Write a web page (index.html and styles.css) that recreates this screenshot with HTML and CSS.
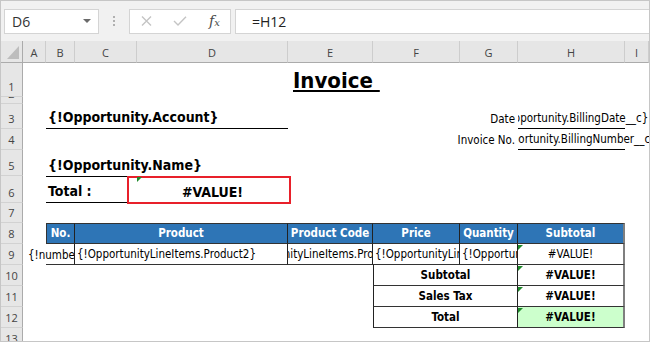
FILE: index.html
```html
<!DOCTYPE html>
<html lang="en">
<head>
  <meta charset="UTF-8" />
  <title>Invoice - Book1</title>
  <link rel="stylesheet" href="styles.css">
</head>
<body>
  <div class="window">

    <div class="toolbar">
      <div class="name-box">
        <span>D6</span>
        <span class="caret"></span>
      </div>
      <div class="grip"><i></i><i></i><i></i></div>
      <div class="fx-buttons">
        <svg class="btn-icon" width="11" height="10" viewBox="0 0 11 10"><path d="M1 0.5L10 9.5M10 0.5L1 9.5" /></svg>
        <svg class="btn-icon" width="14" height="10" viewBox="0 0 14 10"><path d="M1 5L5 9L13 0.8" /></svg>
        <span class="fx">f<span>x</span></span>
      </div>
      <div class="formula">=H12</div>
    </div>

    <div class="sheet">
      <!-- column headers -->
      <div class="corner"></div>
      <div class="col-head c-a">A</div>
      <div class="col-head c-b">B</div>
      <div class="col-head c-c">C</div>
      <div class="col-head c-d">D</div>
      <div class="col-head c-e">E</div>
      <div class="col-head c-f">F</div>
      <div class="col-head c-g">G</div>
      <div class="col-head c-h">H</div>
      <div class="col-head c-i">I</div>

      <!-- row headers -->
      <div class="row-head r1">1</div>
      <div class="row-head r2">2</div>
      <div class="row-head r3">3</div>
      <div class="row-head r4">4</div>
      <div class="row-head r5">5</div>
      <div class="row-head r6">6</div>
      <div class="row-head r7">7</div>
      <div class="row-head r8">8</div>
      <div class="row-head r9">9</div>
      <div class="row-head r10">10</div>
      <div class="row-head r11">11</div>
      <div class="row-head r12">12</div>
      <div class="row-head r13">13</div>

      <!-- title -->
      <div class="cell title c-e r1"><span>Invoice&nbsp;</span></div>

      <!-- account / dates -->
      <div class="cell label line c-bd r3">{!Opportunity.Account}</div>
      <div class="cell right c-g r3">Date</div>
      <div class="spill c-hi r3"><div class="field">{!Opportunity.BillingDate__c}</div></div>

      <div class="cell right c-g r4">Invoice No.</div>
      <div class="spill c-hi r4"><div class="field">{!Opportunity.BillingNumber__c}</div></div>

      <div class="cell label c-b r5">{!Opportunity.Name}</div>

      <div class="cell label line top c-bc r6">Total :</div>
      <div class="cell label center flag c-d r6">#VALUE!</div>
      <div class="marked c-d r6"></div>

      <!-- table header -->
      <div class="cell th first c-b r8">No.</div>
      <div class="cell th c-cd r8">Product</div>
      <div class="cell th c-e r8">Product Code</div>
      <div class="cell th c-f r8">Price</div>
      <div class="cell th c-g r8">Quantity</div>
      <div class="cell th last c-h r8">Subtotal</div>

      <!-- line item -->
      <div class="cell clip c-ab r9">{!number}</div>
      <div class="cell td c-b r9"></div>
      <div class="cell td clip c-cd r9">{!OpportunityLineItems.Product2}</div>
      <div class="cell td clip center c-e r9">{!OpportunityLineItems.ProductCode}</div>
      <div class="cell td clip c-f r9">{!OpportunityLineItems.UnitPrice}</div>
      <div class="cell td clip c-g r9">{!OpportunityLineItems.Quantity}</div>
      <div class="cell td last center flag c-h r9">#VALUE!</div>

      <!-- totals -->
      <div class="cell td total-label c-fg r10">Subtotal</div>
      <div class="cell td last center bold flag c-h r10">#VALUE!</div>
      <div class="cell td total-label c-fg r11">Sales Tax</div>
      <div class="cell td last center bold flag c-h r11">#VALUE!</div>
      <div class="cell td total-label c-fg r12">Total</div>
      <div class="cell td last center bold flag green c-h r12">#VALUE!</div>
    </div>

  </div>
</body>
</html>
```

FILE: styles.css
```css
* {
  box-sizing: border-box;
}

body {
  margin: 0;
  background: #fff;
}

.window {
  width: 650px;
  height: 342px;
  border: 1px solid #c6c6c6;
  overflow: hidden;
  background: #fff;
}

/* formula bar */
.toolbar {
  height: 40px;
  display: flex;
  align-items: center;
  padding-left: 3px;
  background: #f1f1f1;
  font-family: "Open Sans", sans-serif;
  color: #333;
}

.name-box {
  width: 95px;
  height: 25px;
  display: flex;
  align-items: center;
  justify-content: space-between;
  padding: 0 7px 0 7px;
  background: #fff;
  border: 1px solid #d4d4d4;
  font-size: 14px;
}

.caret {
  border-left: 4px solid transparent;
  border-right: 4px solid transparent;
  border-top: 4px solid #6a6a6a;
}

.grip {
  width: 6px;
  margin-left: 12px;
  display: flex;
  flex-direction: column;
  align-items: center;
  gap: 2px;
}

.grip i {
  width: 2px;
  height: 2px;
  background: #b0b0b0;
}

.fx-buttons {
  width: 102px;
  height: 25px;
  margin-left: 12px;
  display: flex;
  align-items: center;
  gap: 21px;
  padding-left: 11px;
  background: #fff;
  border: 1px solid #d4d4d4;
}

.btn-icon {
  fill: none;
  stroke: #c4c4c4;
  stroke-width: 1.4;
}

.fx {
  font-family: "DejaVu Serif", serif;
  font-style: italic;
  font-size: 14px;
  color: #4a4a4a;
  margin-left: 1px;
}

.fx span {
  font-size: 10px;
}

.formula {
  flex: 1;
  height: 25px;
  margin-left: 4px;
  padding-left: 16px;
  display: flex;
  align-items: center;
  background: #fff;
  border: 1px solid #d4d4d4;
  border-right: none;
  font-size: 14px;
  color: #222;
}

/* sheet grid */
.sheet {
  display: grid;
  grid-template-columns: 22px 23px 29px 62px 151px 85px 87px 58px 107px 24px;
  grid-template-rows: 22px 34px 7px 25px 21px 26px 27px 20px repeat(6, 21px);
  font-family: "DejaVu Sans Condensed", "Liberation Sans", sans-serif;
  font-size: 11.5px;
  color: #000;
}

.corner {
  grid-row: 1;
  grid-column: 1;
  position: relative;
  background: #e6e6e6;
  border-right: 1px solid #ababab;
  border-bottom: 1px solid #ababab;
}

.corner::after {
  content: "";
  position: absolute;
  right: 3px;
  bottom: 3px;
  width: 12px;
  height: 13px;
  background: #bdbdbd;
  clip-path: polygon(100% 0, 100% 100%, 0 100%);
}

.col-head {
  grid-row: 1;
  display: flex;
  align-items: center;
  justify-content: center;
  padding-top: 1px;
  background: #e6e6e6;
  border-right: 1px solid #cdcdcd;
  border-bottom: 1px solid #ababab;
  font-family: "Open Sans", sans-serif;
  font-size: 11px;
  color: #444;
}

.row-head {
  grid-column: 1;
  display: flex;
  align-items: flex-end;
  justify-content: center;
  overflow: hidden;
  padding-bottom: 2px;
  line-height: 15px;
  background: #e6e6e6;
  border-right: 1px solid #ababab;
  border-bottom: 1px solid #d2d2d2;
  font-family: "Open Sans", sans-serif;
  font-size: 11px;
  color: #444;
}

/* columns */
.c-a { grid-column: 2; }
.c-b { grid-column: 3; }
.c-c { grid-column: 4; }
.c-d { grid-column: 5; }
.c-e { grid-column: 6; }
.c-f { grid-column: 7; }
.c-g { grid-column: 8; }
.c-h { grid-column: 9; }
.c-i { grid-column: 10; }
.c-ab { grid-column: 2 / 4; }
.c-bc { grid-column: 3 / 5; }
.c-bd { grid-column: 3 / 6; }
.c-cd { grid-column: 4 / 6; }
.c-fg { grid-column: 7 / 9; }
.c-hi { grid-column: 9 / 11; }

/* rows */
.r1 { grid-row: 2; }
.r2 { grid-row: 3; }
.r3 { grid-row: 4; }
.r4 { grid-row: 5; }
.r5 { grid-row: 6; }
.r6 { grid-row: 7; }
.r7 { grid-row: 8; }
.r8 { grid-row: 9; }
.r9 { grid-row: 10; }
.r10 { grid-row: 11; }
.r11 { grid-row: 12; }
.r12 { grid-row: 13; }
.r13 { grid-row: 14; }

/* cells */
.cell {
  display: flex;
  align-items: flex-end;
  padding: 0 2px 2px;
  line-height: 16px;
  white-space: nowrap;
}

.right {
  justify-content: flex-end;
  padding-right: 3px;
}

.center {
  justify-content: center;
}

.bold {
  font-weight: bold;
}

.clip {
  overflow: hidden;
}

.title {
  padding: 0 0 5px 5px;
  font-size: 22px;
  font-weight: bold;
  line-height: 22px;
}

.title span {
  text-decoration: underline;
  text-decoration-thickness: 2px;
  text-underline-offset: 2px;
}

.label {
  font-size: 14px;
  font-weight: bold;
  padding-bottom: 3px;
}

.line {
  border-bottom: 1px solid #000;
}

.top {
  border-top: 1px solid #000;
}

/* clipped on the left, spilling to the right */
.spill {
  overflow: hidden;
}

.field {
  width: 107px;
  height: 100%;
  display: flex;
  align-items: flex-end;
  justify-content: center;
  padding-bottom: 2px;
  line-height: 16px;
  white-space: nowrap;
  border-bottom: 1px solid #000;
}

/* error indicator */
.flag {
  position: relative;
}

.flag::before {
  content: "";
  position: absolute;
  left: 0;
  top: 1px;
  border-top: 5px solid #1e8a2a;
  border-right: 5px solid transparent;
}

.marked {
  margin: 0 -3px -1px -10px;
  border: 2px solid #e8202a;
}

/* table */
.th {
  justify-content: center;
  padding-bottom: 2px;
  background: #2e75b6;
  color: #fff;
  font-weight: bold;
  border-top: 1px solid #333;
  border-right: 1px solid #222;
  border-bottom: 1px solid #333;
}

.th.first {
  border-left: 1px solid #333;
}

.td {
  border-right: 1px solid #222;
  border-bottom: 1px solid #333;
}

.td.last,
.th.last {
  border-right: 2px solid #7f7f7f;
}

.c-ab.clip {
  padding-left: 5px;
  padding-right: 1px;
}

.total-label {
  justify-content: center;
  font-weight: bold;
  border-left: 1px solid #222;
}

.green {
  background: #ccffcc;
}
```
